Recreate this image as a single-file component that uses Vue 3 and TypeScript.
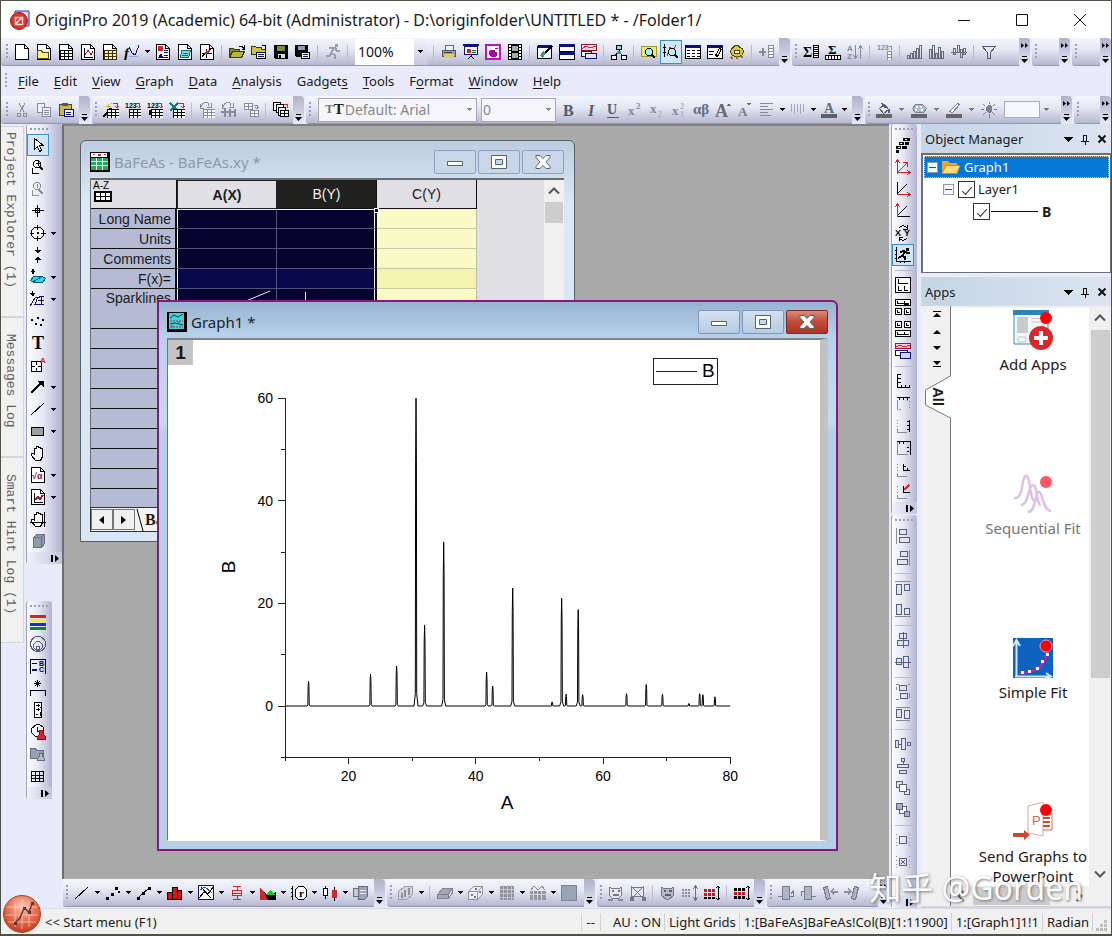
<script setup lang="ts">
import { h, ref } from 'vue'

interface Shape { d?: string; f?: string; s?: string; w?: number; t?: string; x?: number; y?: number; z?: number; serif?: boolean; it?: boolean }

const K = '#000'
const G = '#868a9b'
const R = '#d8232f'
const N = '#10107a'
const L = (d: string, s = K, w = 1): Shape => ({ d, s, w })
const F = (d: string, f = K): Shape => ({ d, f })
const B = (d: string, f = '#fff', s = K): Shape => ({ d, f, s })
const T = (t: string, x: number, y: number, z: number, f = K, serif = false, it = false): Shape => ({ t, x, y, z, f, serif, it })
const box = (x: number, y: number, w: number, hh: number) => `M${x} ${y}h${w}v${hh}h${-w}z`
const cells = (x: number, y: number, c: number, r: number, w: number, hh: number) => {
  let d = ''
  for (let j = 0; j < r; j++) for (let i = 0; i < c; i++) d += box(x + i * (w + 1), y + j * (hh + 1), w, hh)
  return d
}
const table = (x: number, y: number, c: number, r: number, w: number, hh: number, ink = K, fill = '#fff') => [
  F(box(x, y, c * (w + 1) + 1, r * (hh + 1) + 1), ink), F(cells(x + 1, y + 1, c, r, w, hh), fill),
]
const doc = [B('M1.5 .5h9l4 4v11h-13z'), L('M10.5 .5v4h4')]
const runner = (c: string) => [F('M10 0h3v3h-3z', c), L('M4 4h6l2 3h3M9 4l-3 5l4 2v4M6.5 9l-2 3h-4', c, 2)]
const magnifier = (x: number, y: number, f: string) => [B(`M${x + 1.5} ${y + .5}h3l2 2v3l-2 2h-3l-2-2v-3z`, f), L(`M${x + 6} ${y + 7}l3 3`, K, 2)]
const redArrow = (c: string) => [L('M10 1.5h4v4M12 4l2 2l2-2', c)]
const numTable = (c: string, a: string) => [T('123', 0, 6, 7, c), ...redArrow(a), ...table(4, 7, 3, 3, 3, 2, c)]
const hand = 'M5.5 15.5l-4-5v-2h2l1 1v-6h2v-2h2v1h2v1h2v8l-2 4z'
const frame = (x: number, y: number, w: number, hh: number, c = K) => [B(box(x + .5, y + .5, w, hh), '#fff', c), L(`M${x + 2.5} ${y + 2}v${hh - 3.5}h${w - 4}`, c)]
const dots = (a: string) => L(a, '#888b98')
const block = (d: string, c = '#55607a') => B(d, '#dfe3f2', c)

const icons: Record<string, Shape[]> = {
  new: doc,
  opendoc: [...doc, B('M1.5 6.5h4l1 2h6v6h-11z', '#ffef8a', '#5a4a00')],
  book: [...doc, ...table(2, 6, 3, 3, 3, 2)],
  graph: [...doc, L('M4.5 4v9h8', K), L('M5 11l3-5l3 5l2-4', '#b01822')],
  matrix: [...doc, ...table(2, 6, 3, 3, 3, 2, '#3a3000', '#fff39a')],
  func: [T('f', 0, 14, 15, K, true, true), L('M5 3l3 6l3 2l3-7l1-3', N), L('M5 12.5h9', '#9aa')],
  report: [...doc, F('M3 2h5v5h-5z', R), F('M3 14l3-5l3 5z', N), L('M9 6.5h4M9 8.5h4M9 11.5h4M9 13.5h4', N)],
  notes: [...doc, B('M4.5 6.5h9l-2 7h-8z', '#7fe0e0', '#0a6a6a'), L('M6 9h5M5 11h6', '#0a6a6a')],
  layout: [...doc, L('M3 12.5l9-8M3 9.5h10M7.5 5v9', K), L('M6 9.5l5-3', R, 2)],
  folder: [B('M.5 12.5v-8h4l1 1h5v2', '#8a8a1e', '#3c3c00'), B('M.5 13.5l3-6h12l-3 6z', '#b5b53a', '#3c3c00'), L('M10 2.5h3l2 2M15.5 1v4h-3', K)],
  folders: [B('M.5 10.5v-8h4l1 1h5v2h4v5z', '#c8c83e', '#3c3c00'), B('M5.5 8.5h9v6h-9z'), L('M7 10.5h6M7 12.5h6', N), L('M11 1.5h3v3', K)],
  save: [F('M1 1h14v14h-13l-1-1z'), F('M4 2h8v5h-8z', '#7b8f3a'), F('M5 10h7v4h-7z', '#dcdcdc'), F('M6 11h2v3h-2z')],
  saveall: [F('M0 1h13v12h-12l-1-1z'), F('M3 2h7v4h-7z', '#8b9ac0'), B('M6.5 8.5h8v6h-8z'), L('M8 10.5h5M8 12.5h5', N)],
  run: runner('#9a9dab'),
  print: [B('M4.5 1.5h8v5h-8z', '#f0f0f4', '#666'), B('M1.5 6.5h13v6h-13z', '#9b9ea8', '#555'), F('M3 10h10v4h-10z', '#d8d070'), L('M3 8.5h8', '#444')],
  slide: [B('M1.5 2.5h13v8h-13z', '#fff', N), L('M0 1h16', N, 2), F('M4 5h4v4h-4z', R), L('M9 6h4M9 8h4', '#0a7a30'), L('M8 11v2M5 15l3-3l3 3', K)],
  magenta: [B('M1 1h14v14h-14z', '#fff', '#c010c0'), L('M1 1h14v14h-14z', '#c010c0', 2), F('M5 6h5v2h2v3l-2 2h-4l-2-2v-3z', '#a008a8'), L('M10 4.5h3', '#a008a8')],
  film: [F('M1 0h14v16h-14z'), F('M5 2h6v5h-6zM5 9h6v5h-6z', '#9fb0a8'), F(cells(2, 1, 1, 5, 2, 2) + cells(12, 1, 1, 5, 2, 2), '#fff')],
  brush: [B('M.5 2.5h14v12h-14z'), F('M1 1h14v3h-14z', N), F('M3 12l3-5l3 2l-3 5z', '#2a9b9b'), L('M8 9l7-7', K, 2)],
  split: [...[0, 8].flatMap(y => [B(`M.5 ${y + 1}h15v6h-15z`), F(`M0 ${y}h16v3h-16z`, N)])],
  wins: [B('M.5 .5h15v6h-15z', '#ffe0e4', '#a01030'), L('M1 5l4-3l4 2l6-2', R), B('M.5 7.5h10v5h-10z', '#fff', N), B('M4.5 9.5h11v5h-11z', '#dfe7ff', N)],
  tree: [L('M8 5v4M3.5 12l4-4l5 4', K), B('M5.5 1.5h5v4h-5z', '#8fe0e0'), B('M.5 11.5h5v4h-5z'), B('M10.5 11.5h5v4h-5z'), F('M6 7h4v3h-4z', '#2a9b9b')],
  find: [B('M.5 2.5h15v10h-15z', '#eaea78', '#98982a'), ...magnifier(5, 4, '#9ff0f4')],
  graphfind: [L('M1.5 0v13M0 3.5h3M0 8.5h3', K), L('M4 12l3-9l2 6l4-8', R), ...magnifier(6, 4, '#b4f2f6')],
  list: [B('M.5 1.5h15v13h-15z'), F('M1 1h15v3h-15z', N), L('M2 6.5h3M7 6.5h3M12 6.5h3M2 9.5h3M7 9.5h3M12 9.5h3M2 12.5h3M7 12.5h3M12 12.5h3', K)],
  edit: [B('M.5 1.5h15v13h-15z'), F('M1 1h15v3h-15z', N), L('M2 7.5h5M2 10.5h4', K), B('M8.5 11.5l4-7l2 1l-4 7z', '#ffef70')],
  gear: [B('M2.5 4.5l2-1l1-2h4l1 2l3 1l1 3l-1 3l-3 2h-5l-3-2l-1-3z', '#d8c83c', '#4c4400'), B('M5.5 6.5h5v3h-5z', '#fff', '#4c4400'), L('M2 13l2 2M7.5 12v3M12 12l2 2', '#8a7a10', 2)],
  addcol: [L('M0 8h7M3.5 4v8', G, 2), ...table(9, 1, 1, 4, 4, 2, G)],
  sumcol: [T('Σ', 0, 13, 14, K, true), ...table(10, 1, 1, 6, 4, 1)],
  sumrow: [T('Σ', 3, 10, 13, K, true), ...table(0, 11, 5, 1, 2, 3)],
  sort: [T('A', 0, 7, 8, G), T('Z', 0, 15, 8, G), L('M8.5 1v13M6 11l2.5 3l2.5-3M13.5 15v-13M11 5l2.5-3l2.5 3', G)],
  num: [T('123', 0, 6, 7, G), L('M12 2.5h2v3', G), ...table(10, 7, 1, 3, 3, 2, G)],
  bars1: [L(box(.5, 11.5, 2, 3) + box(3.5, 9.5, 2, 5) + box(6.5, 7.5, 2, 7) + box(9.5, 4.5, 2, 10) + box(12.5, 1.5, 2, 13), '#666a7a')],
  bars2: [L(box(.5, 5.5, 2, 9) + box(3.5, 1.5, 2, 13) + box(6.5, 9.5, 2, 5) + box(9.5, 3.5, 2, 11) + box(12.5, 7.5, 2, 7), '#666a7a')],
  bars3: [L('M0 8.5h16' + box(2.5, 4.5, 2, 6) + box(6.5, 1.5, 2, 7) + box(9.5, 5.5, 2, 8) + box(12.5, 4.5, 2, 6), '#666a7a')],
  filter: [L('M1.5 2.5h13l-5 6v6h-3v-6z', '#555a6a')],
  cut: [L('M5 1l5 9M11 1l-5 9M3.5 11.5h3v3h-3zM9.5 11.5h3v3h-3z', G)],
  copy: [B('M1.5 1.5h7v9h-7z', '#f0f1f8', G), B('M6.5 5.5h8v9h-8z', '#f0f1f8', G), L('M8 8.5h5M8 10.5h5M8 12.5h5', G)],
  paste: [B('M1.5 2.5h12v11h-12z', '#c9b950', '#4d4a18'), F('M4 1h6v3h-6z', '#555'), B('M6.5 7.5h9v7h-9z', '#e8f4ff', N), L('M8 10.5h5M8 12.5h5', N)],
  wand: [L('M0 15l8-9', K, 2), L('M5 2v4M3 4h5M8 1l1 1', '#c8b820'), ...redArrow(R), ...table(4, 7, 3, 3, 3, 2)],
  num1: numTable(K, R),
  num2: [...numTable(K, R), F('M2 8h3v5h-3z', K)],
  excel: [L('M1 1l8 8M9 1l-8 8', '#0a7f7f', 2), ...redArrow(R), ...table(4, 7, 3, 3, 3, 2)],
  imp1: [L('M2 5c2-6 8-6 8-1M12 1v4h-4M1 2v4h4', G), ...table(4, 7, 3, 3, 3, 2, G)],
  imp2: [L('M2 5c2-6 8-6 8-1M12 1v4h-4M1 2v4h4', G), L('M0 9.5h15M3.5 7v8M8.5 7v8M13.5 7v8', G, 2)],
  imp3: [...table(1, 1, 2, 2, 3, 2, G), L('M11 3h3v3M12 5l2 2l2-2', G), ...table(7, 8, 2, 2, 3, 2, G)],
  stack: [B('M.5 .5h7v8h-7z'), B('M3.5 2.5h7v8h-7z'), B('M5.5 5.5h7v8h-7z'), L('M11 2.5h3v3', R), ...table(7, 8, 2, 2, 3, 2)],
  bold: [T('B', 2, 14, 16, '#555a66', true)],
  italic: [T('I', 5, 14, 16, '#555a66', true, true)],
  under: [T('U', 2, 12, 14, '#555a66', true), L('M2 15.5h12', '#555a66')],
  sup: [T('x', 1, 13, 13, G, true), T('2', 9, 7, 9, G, true)],
  sub: [T('x', 1, 11, 13, G, true), T('2', 9, 15, 8, '#aaacba', true)],
  supsub: [T('x', 1, 13, 13, G, true), T('2', 9, 7, 8, '#aaacba', true), T('1', 9, 15, 8, '#aaacba', true)],
  greek: [T('αβ', 0, 12, 15, '#6a6e7c', true)],
  bigger: [T('A', 0, 15, 18, '#666a76', true), F('M12 4l2-3l2 3z', '#666a76')],
  smaller: [T('A', 1, 14, 13, '#777b88', true), F('M10 1h4l-2 3z', '#666a76')],
  align: [L('M1 1.5h13M1 4.5h8M1 7.5h13M1 10.5h8M1 13.5h11', G)],
  vbars: [L('M1.5 2v8M4.5 2v10M7.5 2v8M10.5 2v10M13.5 2v8', '#a5a8b4')],
  fontcolor: [T('A', 3, 11, 14, '#666a76', true), F('M0 12h16v4h-16z', '#5a5e68')],
  fill: [B('M3.5 6.5l5-4l4 5l-5 4z', '#eef', '#5a5e6c'), L('M6 1l3 5M13 7v4', '#5a5e6c', 2), F('M0 12h16v4h-16z', '#666')],
  palette: [B('M1.5 6.5l3-4h7l4 4l-3 4h-8z', '#aebbd0', '#7a8090'), F('M5 4h2v2h-2zM9 4h2v2h-2zM4 7h2v2h-2zM10 7h2v2h-2z', '#fff'), F('M0 12h16v4h-16z', '#666')],
  pen: [B('M3.5 9.5l8-8l2 1l-7 8z', '#fff', '#777'), F('M0 12h16v4h-16z', '#666')],
  sun: [F('M5 5l2-2h2l2 2v4l-2 2h-2l-2-2z', '#7b7f8e'), L('M8 0v2M8 12v4M0 7.5h3M13 7.5h3M2 2l2 2M12 4l2-2M2 13l3-3M14 13l-3-3', '#7b7f8e')],
  pointer: [B('M4.5 1.5v11l3-3l2 5l2-1l-2-5h4z')],
  zoomin: [...magnifier(4, 1, '#fff'), L('M6 4.5h5M8.5 2v5M2.5 9v5h6', K)],
  zoomout: [B('M5.5 1.5h3l2 2v3l-2 2h-3l-2-2v-3z', '#e8eaf4', G), L('M9 9l4 4', G, 2), L('M7.5 3v4M2.5 9v5h6', G)],
  cross: [L('M2 7.5h12M7.5 2v12', K), L('M5.5 5.5h4v4h-4z')],
  target: [B('M4.5 2.5h6l3 3v5l-3 3h-6l-3-3v-5z'), L('M7.5 0v5M7.5 11v5M0 8h4M11 8h5', K), F('M7 7h2v2h-2z')],
  range: [F('M5 3h6l-3 4zM5 13h6l-3-4z'), L('M7.5 0v4M7.5 12v4', K)],
  mask: [F('M1 2h4l-2 4zM2 0h2v3h-2z'), B('M.5 11.5l3-4h9l3 2l-3 4h-9z', '#2fd5e8', '#0a5a7a'), L('M3 13l8-5', '#0a5a7a')],
  pick: [F('M0 2h5l-2 4zM2 0h1v3h-1z'), L('M0 15l5-8l9-2M8 6l-3 7h9M8 9h6', N), L('M11 6v7', K)],
  points: [F('M1 6h2v2h-2zM5 10h2v2h-2zM7 4h2v2h-2zM10 11h2v2h-2zM12 6h2v2h-2z')],
  text: [T('T', 2, 14, 18, K, true)],
  region: [B('M1.5 4.5h10v10h-10z'), L('M6.5 4v4M6.5 11v4M2 9.5h3M8 9.5h4', K), T('A', 10, 6, 8, R)],
  arrow: [L('M1 14l9-9', K, 2), F('M7 2h7v7z')],
  line: [L('M1 14l13-12', K)],
  rect: [B('M1.5 4.5h12v8h-12z', '#a0a0a0')],
  pan: [B(hand)],
  formula: [...doc, T('√α', 2, 12, 9, '#a01040')],
  insgraph: [...doc, L('M4.5 4v9h8', K), L('M5 11l3-3l2 2l3-4', '#b01822', 2)],
  pan2: [B(hand), L('M0 11.5h16M14.5 1v15', K)],
  cube: [B('M3.5 4.5l3-3h8v9l-3 4h-8z', '#8d9ab0', '#66708a'), L('M3.5 4.5h8v9M11.5 4.5l3-3', '#66708a')],
  rainbow: [F('M0 1h16v3h-16z', '#e02020'), F('M0 5h16v3h-16z', '#f4ee20'), F('M0 9h16v3h-16z', '#1530d0'), F('M0 13h16v3h-16z', '#138030')],
  rings: [L('M8 .5a7.5 7.5 0 1 0 .1 0M8 5.5a4.5 4.5 0 1 0 .1 0M8 10a2 2 0 1 0 .1 0', '#555c7a')],
  legend: [L('M.5 16v-15h15v15', K), L('M2 5.5h5', K), L('M2 11.5h5', N, 2), T('B', 9, 8, 7), T('C', 9, 14, 7)],
  star: [L('M4 3.5h7M7.5 0v7M5 1l5 5M10 1l-5 5', K), L('M.5 16v-6h15v6', K)],
  scale: [B('M4.5 .5h7v15h-7z'), L('M6 3.5h4M8 2v3M6 7.5h4M8 6v3M6 12.5h2M10 5v1M10 10v4', K)],
  clock: [B('M6.5 .5h3l4 3v4l-4 5h-4l-4-4v-4z'), L('M7.5 3v4h3', K), B('M9.5 6.5h4v4l2 2v3h-8v-3l2-2z', R, '#8c0a10')],
  stamp: [B('M.5 2.5h5l1 2h7v8h-13z', '#9aa0b4', '#666c80'), B('M9.5 7.5h3v3l2 2v2h-7v-2l2-2z', '#b7bccb', '#666c80')],
  grid: [L(box(1.5, 3.5, 12, 10) + 'M1 7h13M1 10.5h13M5.5 3v11M9.5 3v11', K)],
  pattern: [F('M8 1h7v3h-7zM4 5h5v3h-5zM10 5h4v3h-4zM1 9h5v3h-5zM7 9h5v3h-5zM1 13h3v3h-3z'), F('M10 2h2v1h-2zM5 6h2v1h-2zM3 10h2v1h-2z', '#fff')],
  rescale: [L('M2.5 15v-14M0 4l2.5-3l2.5 3M2 13.5h13M12 11l3 2.5l-3 2.5', R), L('M3 13l9-9M8 3.5h4v4', R)],
  rescalex: [L('M2.5 13v-12M3 12l9-9', K), L('M2 13.5h13M12 11l3 2.5l-3 2.5', R)],
  rescaley: [L('M3 13.5h12M3 12l9-9', K), L('M2.5 14v-13M0 4l2.5-3l2.5 3', R)],
  swap: [T('X', 0, 11, 9), T('Y', 9, 11, 9), L('M4 3c2-3 6-3 8 0M12 0v4h-4M12 13c-2 3-6 3-8 0M4 16v-4h4', K)],
  speed: [L('M1.5 0v14.5h14M0 3.5h1M0 7.5h1M0 11.5h1M5.5 16v-2M9.5 16v-2', K), F('M11 1h3v3h-3z'), L('M5 5l4-1l3 2h3M10 5l-3 4l3 1v3M7 9l-4 2', K, 2)],
  lay1: [B('M.5 .5h15v15h-15z'), L('M3.5 2v4h9M3.5 9v4h3M9.5 9v4h3', K)],
  lay2: [...frame(0, 0, 15, 6), L('M9.5 2v3h4', K), ...frame(0, 9, 6, 6), ...frame(9, 9, 6, 6)],
  lay3: [...frame(0, 0, 6, 6), ...frame(9, 0, 6, 6), ...frame(0, 9, 15, 6), L('M9.5 11v2h4', K)],
  lay4: [B('M.5 .5h15v5h-15z', '#ffc8d4', '#a01040'), L('M1 4l4-2l4 2l6-2', R), B('M.5 7.5h12v5h-12z', '#fff', N), B('M5.5 9.5h10v6h-10z', '#cfd6ff', N)],
  ax1: [L('M3 1.5h3M3 5.5h3M3 9.5h3M2.5 1v13h12M6.5 12v2M10.5 12v2M14.5 12v2', K)],
  ax2: [L('M2 2.5h13M4.5 3v2M8.5 3v2M12.5 3v2', K), dots('M2.5 5v10M12.5 5v1M14.5 6v1M14.5 9v1M14.5 12v1M4 14.5h2')],
  ax3: [L('M14.5 3v12M12 4.5h2M12 8.5h2M12 12.5h2', K), dots('M2.5 3v1M2.5 6v1M2.5 9v1M2.5 12v3h9')],
  ax4: [L('M2 2.5h13v13M4.5 3v2M8.5 3v2M12 8.5h2M12 12.5h2', K), dots('M2.5 3v12h10')],
  ax5: [L('M8.5 3v6h6M9 5.5h2M12.5 9v-2', K), dots('M2.5 3v1M2.5 6v1M2.5 9v1M2.5 12v3h9')],
  ax6: [L('M8.5 3v6h6', K), L('M9 7l5-5', R, 2), dots('M2.5 3v1M2.5 6v1M2.5 9v1M2.5 12v3h9')],
  alL: [dots('M1.5 0v16'), block(box(4.5, 1.5, 7, 5)), block(box(4.5, 9.5, 10, 5))],
  alR: [dots('M14.5 0v16'), block(box(5.5, 1.5, 7, 5)), block(box(2.5, 9.5, 10, 5))],
  alT: [dots('M0 1.5h16'), block(box(1.5, 4.5, 5, 10)), block(box(9.5, 4.5, 5, 6))],
  alB: [dots('M0 14.5h16'), block(box(1.5, 2.5, 5, 10)), block(box(9.5, 6.5, 5, 6))],
  alV: [block(box(4.5, 1.5, 7, 5)), block(box(2.5, 8.5, 11, 5)), L('M8 0v16', '#55607a')],
  alH: [block(box(1.5, 4.5, 5, 6)), block(box(8.5, 2.5, 5, 11)), L('M0 8h16', '#55607a')],
  sameW: [dots('M1 .5h3M1 15.5h3M13 .5h2M1.5 3v3M14.5 9v5'), block(box(4.5, 1.5, 7, 5)), block(box(5.5, 9.5, 7, 5))],
  sameH: [dots('M1 1.5h14M1 14.5h14'), block(box(1.5, 3.5, 5, 8)), block(box(9.5, 4.5, 5, 8))],
  disH: [block(box(.5, 4.5, 3, 7)), block(box(6.5, 2.5, 4, 11)), block(box(12.5, 6.5, 3, 3)), L('M4 8h2', '#55607a')],
  disV: [block(box(6.5, .5, 3, 3)), block(box(2.5, 6.5, 11, 3)), block(box(4.5, 12.5, 7, 3)), L('M8 4v2', '#55607a')],
  front: [block(box(1.5, 1.5, 6, 6)), block(box(9.5, 9.5, 5, 5)), B(box(4.5, 4.5, 7, 7), '#fff', '#55607a')],
  back: [B(box(4.5, 4.5, 7, 7), '#fff', '#55607a'), B(box(1.5, 1.5, 6, 6), '#aab0c6', '#55607a'), B(box(9.5, 9.5, 5, 5), '#aab0c6', '#55607a')],
  group: [L(box(4.5, 4.5, 7, 7), '#55607a'), dots('M1 2.5h1M1 6.5h1M1 10.5h1M1 13.5h1M14 2.5h1M14 6.5h1M14 10.5h1M14 13.5h1')],
  ungroup: [L(box(4.5, 4.5, 7, 7) + 'M6 6l4 4M10 6l-4 4', '#55607a'), dots('M1 2.5h1M1 6.5h1M1 10.5h1M1 13.5h1M14 2.5h1M14 6.5h1M14 10.5h1M14 13.5h1')],
  scatter: [F('M1 12h3v3h-3zM6 8h3v3h-3zM10 2h3v3h-3zM13 6h2v2h-2z')],
  linept: [L('M2 13l12-11', K), F('M1 12h3v3h-3zM6 7h3v3h-3zM12 2h3v3h-3z')],
  column: [B(box(.5, 7.5, 5, 7), '#d01818'), B(box(5.5, 2.5, 5, 12), '#d01818'), B(box(10.5, 5.5, 4, 9), '#d01818')],
  plotbox: [B('M.5 .5h15v14h-15z', '#fff', N), L('M1 13l5-6l4 2l5-7M3 2l10 11', K), L('M2 5l5-3l7 6', '#2050d0')],
  boxplot: [L('M4 1.5h8M8 1v4M8 11v4M4 14.5h8', R), B('M3.5 5.5h9v5h-9z', '#ffd8d8', R), L('M3 8h10', R)],
  area: [F('M0 3l8 7l8-3v8h-16z'), F('M0 3l4 4l4 8h-8z', R), F('M6 10l4-5l5 5z', '#20c030')],
  polar: [L('M1.5 1v14M0 3.5h1M0 7.5h1M0 11.5h1', K), B('M7.5 1.5h5l3 3v7l-3 3h-5l-3-3v-7z'), T('r', 8, 12, 11, K, true)],
  candle: [L('M3.5 1v13M12.5 2v14', K), B(box(1.5, 3.5, 4, 7)), F(box(10, 5, 5, 8), R)],
  wall: [B('M.5 3.5h9v8h-9z', '#c7cbd8', '#666c7c'), B('M5.5 1.5h9v10l-3 3h-6z', '#9da3b6', '#666c7c'), L('M7 5h6M7 8h6', '#eef')],
  g3a: [B('M.5 6.5l6-5h8v8l-6 5h-8z', '#d2d4de', '#999ca8'), F('M3 8h2v5h-2zM6 5h2v7h-2zM10 3h2v7h-2z', '#8b8f9c')],
  g3b: [B('M.5 9.5l5-6h10l-4 6zM.5 9.5h11v4h-11z', '#a3a6b1', '#80838e'), L('M11.5 13l4-5v-4', '#80838e')],
  g3c: [B('M.5 6.5l5-5h9v8l-5 5h-9z', '#ecedf3', '#90939e'), L('M.5 6.5h9v8M9.5 6.5l5-5', '#90939e'), F('M3 9h2v2h-2zM6 11h2v2h-2zM7 3h2v2h-2zM11 6h2v2h-2z', '#777')],
  g3d: [F('M1 1h14v14h-14z', '#8f929c'), L('M0 4.5h16M0 8.5h16M0 12.5h16M4.5 0v16M8.5 0v16M12.5 0v16', '#c4c6cf')],
  g3e: [L('M1 5l3-4l4 4l4-4l3 4', G), F('M0 6h16v9h-16z', '#94979f'), L('M0 9.5h16M3.5 6v9M7.5 6v9M11.5 6v9', '#d4d5dc')],
  g3f: [B('M.5 .5h15v15h-15z', '#99a4b6', '#7c8496')],
  face: [B('M1.5 2.5l3 1h6l3-1v8l-3 3h-6l-3-3z', '#e6e8ef', '#747885'), F('M4 5h2v2h-2zM10 5h2v2h-2zM5 9h6v2h-6z', '#747885'), L('M0 15h5M10 15h5', G, 2)],
  facex: [B('M1.5 2.5h12v9h-12z', '#e6e8ef', '#747885'), L('M1 1l13 13M14 1l-13 13', '#747885'), F('M0 12h4v4h-4zM12 12h4v4h-4z', '#747885')],
  shield: [B('M1.5 2.5l3 1h6l3-1v8l-5 4h-2l-5-4z', '#b6bac6', '#747885'), F('M4 5h2v2h-2zM9 5h3v2h-3zM5 9h6v2h-6z', '#595e6a')],
  dotsgrey: [F(cells(0, 4, 3, 3, 2, 2), '#8a8e9b'), L('M13.5 1v14M11 4l2.5-3l2.5 3M11 12l2.5 3l2.5-3', '#6c7080')],
  dotsred: [F(cells(0, 4, 3, 2, 3, 3), '#c01828'), F(cells(0, 12, 3, 1, 3, 2)), L('M14 1v14M12 3l2-2l2 2M12 13l2 2l2-2', K)],
  dotsmix: [F(cells(0, 3, 3, 3, 3, 3)), F(cells(0, 7, 3, 1, 3, 3), '#c01828'), L('M14 1v14M12 3l2-2l2 2M12 13l2 2l2-2', K)],
  rotA: [B('M4.5 1.5h7v13h-7z', '#aeb5c6', '#747b8e'), L('M0 11.5h4M12 11.5h3v-5l-2 2', '#747b8e')],
  rotB: [B('M4.5 1.5h7v13h-7z', '#aeb5c6', '#747b8e'), L('M1.5 11v-5h3M12 11.5h4', '#747b8e')],
  rotC: [B('M1.5 2.5l4-1l3 12l-4 1z', '#aeb5c6', '#747b8e'), L('M9 6.5h7M12 3.5l-3 3l3 3', '#8a90a2', 2)],
  rotD: [B('M14.5 2.5l-4-1l-3 12l4 1z', '#aeb5c6', '#747b8e'), L('M0 6.5h7M4 3.5l3 3l-3 3', '#8a90a2', 2)],
}

const Icon = (p: { name: string }) =>
  h('svg', { class: 'ico', viewBox: '0 0 16 16', width: 16, height: 16, 'aria-hidden': 'true' },
    (icons[p.name] ?? []).map(s => s.t
      ? h('text', { x: s.x, y: s.y, fill: s.f, 'font-size': s.z, 'font-weight': 700, 'font-style': s.it ? 'italic' : 'normal', 'font-family': s.serif ? 'Liberation Serif, serif' : 'Liberation Sans, sans-serif' }, s.t)
      : h('path', { d: s.d, fill: s.f ?? 'none', stroke: s.s ?? 'none', 'stroke-width': s.w ?? 1 })))
Icon.props = ['name']

const caret = () => h('svg', { class: 'caret', viewBox: '0 0 5 3', width: 5, height: 3 }, [h('path', { d: 'M0 0h5v1h-5zM1 1h3v1h-3zM2 2h1v1h-1z' })])
const combos: Record<string, { label: string; value: string }> = {
  zoom: { label: 'Zoom', value: '100%' },
  font: { label: 'Font', value: 'Default: Arial' },
  size: { label: 'Font size', value: '0' },
}

/* Token syntax: "|" separator, "name+" adds a menu caret, "name!" is pressed, "#zoom" is a combo box. */
const tool = (token: string) => {
  if (token === '|') return h('i', { class: 'sep' })
  if (token === '#swatch') return h('span', { class: 'split' }, [h('button', { class: 'swatch', type: 'button', 'aria-label': 'Colour' }), h('button', { class: 'menu', type: 'button', 'aria-label': 'Colour menu' }, [caret()])])
  if (token[0] === '#') {
    const key = token.slice(1)
    return h('label', { class: ['combo', key] }, [
      key === 'font' ? h('span', { class: 'tt' }, [h('small', 'T'), h('b', 'T')]) : null,
      h('select', { 'aria-label': combos[key].label }, [h('option', combos[key].value)]),
      h('span', { class: 'drop' }, [caret()]),
    ])
  }
  const name = token.replace(/[+!]/g, '')
  const btn = h('button', { class: ['tool', { on: token.includes('!') }], type: 'button', 'aria-label': name }, [h(Icon, { name })])
  return token.includes('+') ? h('span', { class: 'split' }, [btn, h('button', { class: 'menu', type: 'button', 'aria-label': name + ' menu' }, [caret()])]) : btn
}
interface BarProps { items: string; vertical?: boolean; more?: boolean }
const ToolBar = (p: BarProps) =>
  h('div', { class: ['bar', p.vertical ? 'v' : 'h'], role: 'toolbar' }, [
    h('i', { class: 'grip' }),
    ...p.items.split(' ').filter(Boolean).map(tool),
    h('i', { class: 'fillup' }),
    h('button', { class: 'cap', type: 'button', 'aria-label': 'Toolbar options' }, p.vertical
      ? [h('svg', { viewBox: '0 0 8 7', width: 8, height: 7 }, [h('path', { d: 'M0 0h2v7h-2zM4 0l4 3.5l-4 3.5z' })])]
      : [
          p.more ? h('svg', { viewBox: '0 0 8 5', width: 8, height: 5 }, [h('path', { d: 'M0 0l3 2.5l-3 2.5zM4 0l3 2.5l-3 2.5z' })]) : h('i'),
          h('svg', { viewBox: '0 0 7 7', width: 7, height: 7 }, [h('path', { d: 'M1 0h5v1h-5zM0 3h7l-3.5 4z' })]),
        ]),
  ])
ToolBar.props = { items: String, vertical: Boolean, more: Boolean }

const top1 = 'new opendoc book graph matrix func+ report notes layout | folder folders save saveall | run | #zoom | print slide magenta film | brush split wins | tree | find graphfind! list edit gear | addcol'
const top2 = 'sumcol sumrow sort | num | bars1 bars2 bars3 | filter'
const left1 = 'pointer! zoomin zoomout cross target+ range mask+ pick+ points text region arrow+ line+ rect+ pan formula+ insgraph+ pan2 cube'
const left2 = 'rainbow rings legend star scale clock stamp grid'
const right1 = 'pattern rescale rescalex rescaley swap speed! | lay1 lay2 lay3 lay4 | ax1 ax2 ax3 ax4 ax5 ax6'
const right2 = 'alL alR | alT alB | alV alH | sameW sameH | disH disV front back | group ungroup'

const menus = ['File', 'Edit', 'View', 'Graph', 'Data', 'Analysis', 'Gadgets', 'Tools', 'Format', 'Window', 'Help']
const keyAt: Record<string, number> = { Gadgets: 6, Format: 1 }
const menuParts = menus.map(m => { const i = keyAt[m] ?? 0; return [m.slice(0, i), m[i], m.slice(i + 1)] })

const tabs = ['Project Explorer (1)', 'Messages Log', 'Smart Hint Log (1)']
const sheetRows = ['Long Name', 'Units', 'Comments', 'F(x)=', 'Sparklines', '', '', '', '', '', '', '', '', '']
const status = ['--', 'AU : ON', 'Light Grids', '1:[BaFeAs]BaFeAs!Col(B)[1:11900]', '1:[Graph1]1!1', 'Radian']
const apps = [
  { id: 'add', name: 'Add Apps' }, { id: 'seq', name: 'Sequential Fit' },
  { id: 'fit', name: 'Simple Fit' }, { id: 'ppt', name: 'Send Graphs to PowerPoint' },
]
const layerOn = ref(true)
const plotOn = ref(true)

const px = (a: number) => 117 + (a - 10) * 6.36
const py = (b: number) => 366 - b * 5.13
const peaks: [number, number][] = [
  [13.7, 4.8], [23.45, 6.2], [27.55, 7.8], [30.6, 60], [31.95, 15.8], [34.95, 32], [41.7, 6.6], [42.65, 3.9], [45.8, 23],
  [52, .8], [53.5, 21], [54.2, 2.3], [56.1, 18.8], [56.8, 2.2], [63.7, 2.4], [66.8, 4.2], [69.35, 2.3], [73.5, .5], [75.2, 2.4], [75.7, 2.2], [77.6, 1.8],
]
const trace = 'M' + px(10) + ' ' + py(0) + peaks.map(([a, b]) => {
  const x = px(a), foot = b > 10 ? 2 : 1.5
  return `L${x - foot} ${py(0)}L${x - .7} ${py(b * .04)}L${x - .4} ${py(b * .8)}L${x} ${py(b)}L${x + .4} ${py(b * .8)}L${x + .7} ${py(b * .04)}L${x + foot} ${py(0)}`
}).join('') + `L${px(80)} ${py(0)}`
const yMajor = [0, 20, 40, 60]
const xMajor = [20, 40, 60, 80]
</script>

<template>
  <div class="shell">
    <header class="title">
      <svg class="logo" viewBox="0 0 20 20" width="20" height="20" aria-hidden="true">
        <path d="M5 1h14v15h-14z" fill="#cdd6f5" stroke="#2b3c9a" />
        <circle cx="9" cy="11" r="8.5" fill="#d9372c" stroke="#9c1c14" />
        <path d="M5.5 7.5h7v7h-7zM6 14l6-7" fill="none" stroke="#ffd9d2" stroke-width="1.5" />
      </svg>
      <h1>OriginPro 2019 (Academic) 64-bit (Administrator) - D:\originfolder\UNTITLED * - /Folder1/</h1>
      <div class="sysbtns">
        <button type="button" aria-label="Minimize"><svg viewBox="0 0 14 14" width="14" height="14"><path d="M1 7.5h12" /></svg></button>
        <button type="button" aria-label="Maximize"><svg viewBox="0 0 14 14" width="14" height="14"><path d="M1.5 1.5h11v11h-11z" /></svg></button>
        <button type="button" aria-label="Close"><svg viewBox="0 0 14 14" width="14" height="14"><path d="M1 1l12 12M13 1l-12 12" /></svg></button>
      </div>
    </header>

    <div class="row">
      <ToolBar class="w1" :items="top1" />
      <ToolBar class="w2" :items="top2" more />
      <ToolBar class="w3" items="" more />
      <ToolBar class="w4" items="" more />
    </div>
    <nav class="menubar">
      <i class="dots" />
      <button v-for="m in menuParts" :key="m.join('')" type="button">{{ m[0] }}<u>{{ m[1] }}</u>{{ m[2] }}</button>
    </nav>
    <div class="row">
      <ToolBar class="w5" items="cut copy paste" />
      <ToolBar class="w6" items="wand num1 num2 excel | imp1 imp2 imp3 | stack" />
      <ToolBar class="w7" items="#font #size bold italic under sup sub supsub greek bigger smaller align+ vbars+ fontcolor+" />
      <ToolBar class="w8 wide" items="fill+ palette+ pen+ sun #swatch" more />
      <ToolBar class="w4" items="" more />
    </div>

    <main class="body">
      <aside class="docktabs">
        <button v-for="t in tabs" :key="t" type="button">{{ t }}</button>
      </aside>
      <div class="leftbars">
        <ToolBar :items="left1" vertical />
        <ToolBar class="small" :items="left2" vertical />
      </div>

      <div class="center">
        <section class="mdi">
          <article class="win sheet">
            <header>
              <svg viewBox="0 0 20 20" width="20" height="20" aria-hidden="true">
                <path d="M0 0h20v20h-20z" /><path d="M1 1h16v4h-16z" fill="#fff" /><path d="M3 2h2v1h-2zM8 2h3v2h-3zM14 2h2v1h-2z" fill="#d02030" />
                <path d="M1 6h17v12h-17z" fill="#24a860" /><path d="M1 9.5h17M1 13.5h17M6.5 6v12M12.5 6v12" stroke="#dff5e6" />
              </svg>
              <h2>BaFeAs - BaFeAs.xy *</h2>
              <span class="winbtns">
                <button type="button" aria-label="Minimize"><svg viewBox="0 0 18 18" width="18" height="18"><path d="M1.5 8.5h15v4h-15z" /></svg></button>
                <button type="button" aria-label="Maximize"><svg viewBox="0 0 18 18" width="18" height="18"><path d="M1.5 2.5h15v13h-15zM5.5 6.5v5h7v-5z" /></svg></button>
                <button type="button" aria-label="Close"><svg viewBox="0 0 18 18" width="18" height="18"><path d="M2 2.5h4l3 3l3-3h4v2l-4 4.5l4 4.5v2h-4l-3-3l-3 3h-4v-2l4-4.5l-4-4.5z" /></svg></button>
              </span>
            </header>
            <div class="sheetbody">
              <table>
                <thead>
                  <tr>
                    <th class="corner" aria-label="Sort">
                      <svg viewBox="0 0 20 20" width="20" height="20"><text x="0" y="7" font-size="10" font-family="Liberation Sans, sans-serif">A-Z</text><path d="M1 9h18v11h-18z" /><path d="M3 11h4v3h-4zM8 11h4v3h-4zM13 11h4v3h-4zM3 15h4v3h-4zM8 15h4v3h-4zM13 15h4v3h-4z" fill="#fff" /></svg>
                    </th>
                    <th class="colA">A(X)</th><th class="colB">B(Y)</th><th class="colC">C(Y)</th>
                  </tr>
                </thead>
                <tbody>
                  <tr v-for="(r, i) in sheetRows" :key="i" :class="{ tall: i === 4, alt: i === 3 }">
                    <th>{{ r }}</th>
                    <td class="sel first"><svg v-if="i === 4" viewBox="0 0 98 38" class="spark"><path d="M69 12l24-10" /></svg></td>
                    <td class="sel last"><svg v-if="i === 4" viewBox="0 0 98 38" class="spark"><path d="M28.5 3v20" /></svg></td>
                    <td class="yel" />
                  </tr>
                </tbody>
              </table>
              <div class="vscroll"><svg viewBox="0 0 12 8" width="12" height="8"><path d="M1 6.5l5-5l5 5" /></svg><i /></div>
            </div>
            <footer>
              <button type="button" aria-label="Previous sheet"><svg viewBox="0 0 6 8" width="6" height="8"><path d="M5 0v8l-5-4z" /></svg></button>
              <button type="button" aria-label="Next sheet"><svg viewBox="0 0 6 8" width="6" height="8"><path d="M0 0v8l5-4z" /></svg></button>
              <svg viewBox="0 0 10 22" width="10" height="22"><path d="M2 0l6 22" stroke="#000" /></svg>
              <strong>BaFeAs</strong>
            </footer>
          </article>

          <article class="win plot">
            <header>
              <svg viewBox="0 0 20 20" width="20" height="20" aria-hidden="true">
                <path d="M0 0h20v20h-20z" /><path d="M2 1h15v16h-15z" fill="#3fd4dc" /><path d="M3 6l4-3l4 2l5-3M3 12l5-1l8 2" fill="none" stroke="#083c50" /><path d="M3 9h13M3 15h13M5 13v2M12 9v3" stroke="#c02838" stroke-dasharray="2 1" />
              </svg>
              <h2>Graph1 *</h2>
              <span class="winbtns">
                <button type="button" aria-label="Minimize"><svg viewBox="0 0 18 18" width="18" height="18"><path d="M1.5 8.5h15v4h-15z" /></svg></button>
                <button type="button" aria-label="Maximize"><svg viewBox="0 0 18 18" width="18" height="18"><path d="M1.5 2.5h15v13h-15zM5.5 6.5v5h7v-5z" /></svg></button>
                <button type="button" class="close" aria-label="Close"><svg viewBox="0 0 18 18" width="18" height="18"><path d="M2 2.5h4l3 3l3-3h4v2l-4 4.5l4 4.5v2h-4l-3-3l-3 3h-4v-2l4-4.5l-4-4.5z" /></svg></button>
              </span>
            </header>
            <div class="page">
              <b class="layer">1</b>
              <svg class="chart" viewBox="0 0 652 500" role="img" aria-label="B versus A">
                <path d="M117.5 58v359M117 417.5h446" class="ax" />
                <g v-for="b in yMajor" :key="'y' + b">
                  <path :d="`M110 ${py(b)}h7M113 ${py(b) + 51.3}h4`" class="ax" />
                  <text x="105" :y="py(b) + 5" text-anchor="end">{{ b }}</text>
                </g>
                <g v-for="a in xMajor" :key="'x' + a">
                  <path :d="`M${px(a)} 417v7M${px(a) - 63.6} 417v4`" class="ax" />
                  <text :x="px(a)" y="441" text-anchor="middle">{{ a }}</text>
                </g>
                <path :d="trace" class="trace" />
                <text x="339" y="469" text-anchor="middle" class="big">A</text>
                <text transform="translate(67 227) rotate(-90)" text-anchor="middle" class="big">B</text>
                <path d="M485.5 18.5h64v26h-64z" class="lg" /><path d="M488 31.5h41" class="ax" />
                <text x="534" y="37" class="big">B</text>
              </svg>
            </div>
          </article>
        </section>
        <div class="row bottom">
          <ToolBar class="w9" items="line+ scatter+ linept+ column+ plotbox+ boxplot+ area+ polar+ candle+ wall" />
          <ToolBar class="w10" items="g3a+ | g3b+ g3c+ g3d+ g3e+ g3f" />
          <ToolBar class="w11" items="face facex | shield dotsgrey dotsred | dotsmix" />
          <ToolBar class="w12" items="rotA rotB rotC rotD" more />
        </div>
      </div>

      <div class="rightbars">
        <ToolBar :items="right1" vertical />
        <ToolBar class="grow" :items="right2" vertical />
      </div>

      <aside class="panels">
        <section class="panel">
          <header><h2>Object Manager</h2><svg viewBox="0 0 44 12" width="44" height="12" aria-hidden="true"><path d="M1 4h9l-4.5 5z" /><path d="M20.5 2v6M23.5 2v6M20 2.5h4M18 8.5h8M22.5 8v4" class="ln" /><path d="M35.5 2.5l7 7M42.5 2.5l-7 7" class="ln bold" /></svg></header>
          <div class="treebox">
            <div class="node root"><button type="button" class="exp" aria-label="Collapse" />
              <svg viewBox="0 0 20 16" width="20" height="16" aria-hidden="true"><path d="M1 14v-12h6l2 2h7v3" fill="#e2a83c" /><path d="M1 14.5l4-8h14l-3 8z" fill="#ffd97c" stroke="#c88c24" /></svg>Graph1</div>
            <div class="node l1"><button type="button" class="exp" aria-label="Collapse" /><label><input v-model="layerOn" type="checkbox">Layer1</label></div>
            <div class="node l2"><label><input v-model="plotOn" type="checkbox" aria-label="B"><i class="sample" /><b>B</b></label></div>
          </div>
        </section>
        <section class="panel apps">
          <header><h2>Apps</h2><svg viewBox="0 0 44 12" width="44" height="12" aria-hidden="true"><path d="M1 4h9l-4.5 5z" /><path d="M20.5 2v6M23.5 2v6M20 2.5h4M18 8.5h8M22.5 8v4" class="ln" /><path d="M35.5 2.5l7 7M42.5 2.5l-7 7" class="ln bold" /></svg></header>
          <div class="appbody">
            <div class="rail">
              <svg viewBox="0 0 29 112" width="29" height="112" aria-hidden="true">
                <path d="M3 84.5l26-14.5v42l-26-13.5z" fill="#fff" />
                <path d="M28.5 0v70l-25 14v15l25 13" fill="none" stroke="#777" />
                <path d="M11 5h8v1h-8zM11 11l4-4l4 4zM11 28l4-4l4 4zM11 40h8l-4 4zM11 55h8l-4 4zM11 60h8v1h-8z" />
              </svg>
              <span>All</span>
            </div>
            <div class="mid">
              <div class="applist">
                <button v-for="a in apps" :key="a.id" type="button" :class="['app', a.id]">
                  <svg viewBox="0 0 40 40" width="40" height="40" aria-hidden="true">
                    <g v-if="a.id === 'add'">
                      <path d="M1 1h34v33h-34z" fill="#f4f6f7" stroke="#3d8fae" /><path d="M0 0h36v5h-36z" fill="#2a86b4" /><path d="M4 7h11v16h-11z" fill="#c9cccd" /><path d="M18 8.5h14M18 12h10M5 27h8v5h-8zM18 24h6" stroke="#c4c8ca" fill="none" />
                      <circle cx="28" cy="28" r="12" fill="#d8282e" /><path d="M28 21v14M21 28h14" stroke="#fff" stroke-width="4" />
                    </g>
                    <g v-else-if="a.id === 'seq'" fill="none" stroke="#dcc3e4" stroke-width="2.5">
                      <path d="M1 24c10 2 7-22 12-22s3 24 9 25M8 31c8 0 7-20 12-20s3 20 8 20M15 38c8 0 7-20 11-20s3 18 12 19" />
                    </g>
                    <g v-else-if="a.id === 'fit'">
                      <path d="M0 0h40v40h-40z" fill="#0f61c0" /><path d="M3.5 39v-36M0 8l3.5-6l3.5 6M2 38.5h34M33 35l5 3.5l-5 2" stroke="#cfe6ff" fill="none" stroke-width="2" /><path d="M6 35c16 0 24-4 29-22" stroke="#c221a0" fill="none" stroke-width="2.5" />
                      <path d="M8 33h3v3h-3zM15 32h3v3h-3zM23 29h3v3h-3zM28 22h3v3h-3zM33 15h3v3h-3z" fill="#fff" />
                    </g>
                    <g v-else>
                      <path d="M15 4l15-4v34l-15-3z" fill="#fff" stroke="#e3a79b" /><path d="M30 12h9v16h-9" fill="none" stroke="#d36a52" /><path d="M30 16h7M30 20h7M30 24h7" stroke="#cf4a2c" stroke-width="2" /><path d="M0 31h11v-3l6 5l-6 5v-3h-11z" fill="#c9492c" />
                      <text x="19" y="23" font-size="13" fill="#d36a52" font-family="Liberation Sans, sans-serif">P</text>
                    </g>
                    <circle cx="33" cy="8" r="6" :fill="a.id === 'seq' ? '#ff5560' : '#fb0006'" :stroke="a.id === 'fit' ? '#f2a0a8' : 'none'" />
                  </svg>
                  <span>{{ a.name }}</span>
                </button>
              </div>
              <div class="hscroll"><svg viewBox="0 0 8 12" width="8" height="12"><path d="M6.5 1l-5 5l5 5" /></svg><i /><svg viewBox="0 0 8 12" width="8" height="12"><path d="M1.5 1l5 5l-5 5" /></svg></div>
            </div>
            <div class="vscroll2"><svg viewBox="0 0 12 8" width="12" height="8"><path d="M1 6.5l5-5l5 5" /></svg><i /><svg viewBox="0 0 12 8" width="12" height="8"><path d="M1 1.5l5 5l5-5" /></svg></div>
          </div>
        </section>
      </aside>
    </main>

    <footer class="status">
      <span class="start">&lt;&lt; Start menu (F1)</span>
      <span v-for="(s, i) in status" :key="s" :class="'s' + i">{{ s }}</span>
      <svg class="resize" viewBox="0 0 12 12" width="12" height="12" aria-hidden="true"><path d="M8 0h3v3h-3zM4 4h3v3h-3zM8 4h3v3h-3zM0 8h3v3h-3zM4 8h3v3h-3zM8 8h3v3h-3z" fill="#bdbdbd" /></svg>
      <button type="button" class="orb" aria-label="Start menu">
        <svg viewBox="0 0 38 38" width="38" height="38">
          <defs><radialGradient id="orbFill" cx=".5" cy=".3" r=".7"><stop offset="0" stop-color="#fbc8b8" /><stop offset=".55" stop-color="#e8704f" /><stop offset="1" stop-color="#c33a22" /></radialGradient></defs>
          <circle cx="19" cy="19" r="18.5" fill="url(#orbFill)" stroke="#a8452e" /><path d="M12 6v26M19 4v30M26 6v26M4 12h30M3 20h32M5 27h28" stroke="#ffd4c4" opacity=".7" />
          <path d="M12 28l5-5l4-10l5 4l3-8" fill="none" stroke="#6b3a36" stroke-width="1.5" /><path d="M11 27h3v3h-3zM20 12h3v3h-3zM25 16h3v3h-3zM28 7h3v3h-3z" fill="#5a3434" />
        </svg>
      </button>
    </footer>
    <div class="mark" aria-hidden="true">知乎 @Gorden</div>
  </div>
</template>

<style>
body { margin: 0; background: #e9ebfa; }
button { font: inherit; color: inherit; border: 0; padding: 0; margin: 0; background: none; }
.bar { display: flex; box-sizing: border-box; flex: none; position: relative; }
.bar.h { height: 28px; background: linear-gradient(#f4f6fd, #e3e5f2 45%, #b6b8d0); border-radius: 3px 4px 4px 3px; border-bottom: 1px solid #9496b4; align-items: center; }
.bar .grip { flex: none; }
.bar.h .grip { width: 2px; height: 16px; margin: 0 3px; background: repeating-linear-gradient(#9c9fb0 0 2px, transparent 2px 4px); }
.bar.v { flex-direction: column; background: linear-gradient(90deg, #fbfcff, #e6e8f5 45%, #b2b4d0); border-left: 1px solid #9fa2b8; border-radius: 3px; }
.bar.v .grip { width: 18px; height: 2px; margin: 4px 3px; background: repeating-linear-gradient(90deg, #9c9fb0 0 2px, transparent 2px 4px); }
.tool { width: 22px; height: 22px; flex: none; display: grid; place-items: center; box-sizing: border-box; }
.tool.on { border: 1px solid #3c8fc4; background: #cfe6f7; }
.bar.h .tool.on { height: 24px; }
.ico { shape-rendering: crispEdges; display: block; }
.ico text { shape-rendering: auto; }
.split { display: flex; flex: none; align-items: center; }
.menu { width: 9px; height: 22px; display: grid; place-items: center; }
.caret { display: block; shape-rendering: crispEdges; }
.sep { flex: none; background: #b9bbcc; }
.bar.h .sep { width: 1px; height: 14px; margin: 0 4px 0 3px; }
.bar.v .sep { height: 1px; width: 18px; margin: 4px 3px 3px; }
.fillup { flex: 1; }
.cap { flex: none; display: flex; background: linear-gradient(#b0b2cc, #c9cbe0 50%, #e9ebf9); }
.bar.h .cap { width: 11px; height: 28px; flex-direction: column; align-items: center; justify-content: space-between; padding: 5px 0 3px; box-sizing: border-box; align-self: flex-start; border-radius: 0 4px 0 0; }
.bar.v .cap { box-sizing: border-box; height: 12px; width: 100%; align-items: center; justify-content: flex-end; padding-right: 3px; background: linear-gradient(90deg, #f0f1fa, #c3c5dc); }
.combo { position: relative; display: flex; align-items: center; height: 24px; background: #fff; box-sizing: border-box; flex: none; }
.combo select { appearance: none; border: 0; background: transparent; font: 14px "Noto Sans", sans-serif; color: #111; width: 100%; height: 100%; padding: 0 14px 0 3px; }
.combo .drop { position: absolute; right: 0; top: 0; bottom: 0; width: 13px; display: grid; place-items: center; background: linear-gradient(#f0f2fb, #c5c8de); pointer-events: none; }
.combo.zoom { width: 72px; height: 26px; margin: 0 3px; }
.combo.font, .combo.size { border: 1px solid #a5a7b4; background: #f6f6fa; }
.combo.font select, .combo.size select { color: #85878f; padding-left: 1px; }
.combo.font .drop, .combo.size .drop { background: none; }
.combo.font .drop svg, .combo.size .drop svg { fill: #888; }
.combo.font { width: 159px; margin: 0 4px; }
.combo.size { width: 75px; margin-right: 2px; }
.combo .tt { display: flex; flex: none; padding-left: 6px; font: 700 15px "Liberation Serif", serif; }
.combo .tt small { font-size: 13px; color: #777; }
.swatch { width: 36px; height: 17px; border: 1px solid #a9abb8; background: #f7f8ff; margin-left: 4px; box-sizing: border-box; }
.wide .menu { width: 13px; }
.wide .menu svg { fill: #777; }
</style>

<style scoped>
.shell { min-height: 100vh; box-sizing: border-box; display: flex; flex-direction: column; border: 1px solid #4f5046; border-bottom-width: 2px; background: #e9ebfa; font-family: "Noto Sans", sans-serif; color: #1a1a1a; position: relative; overflow: hidden; }
h1, h2 { margin: 0; font-weight: 400; white-space: nowrap; }
.title { height: 37px; display: flex; align-items: center; background: #fff; padding-left: 9px; }
.title h1 { font-size: 16px; line-height: 20px; margin-left: 5px; }
.sysbtns { margin-left: auto; margin-right: 2px; display: flex; }
.sysbtns button { width: 58px; height: 36px; display: grid; place-items: center; }
.sysbtns svg { fill: none; stroke: #111; stroke-width: 1; }
.row { display: flex; gap: 2px; height: 28px; }
.w1, .w5 { padding-left: 2px; }
.w1 { width: 789px; } .w2 { width: 238px; } .w3 { width: 38px; } .w4 { flex: 1; }
.w5 { width: 89px; } .w6 { width: 212px; } .w7 { width: 557px; } .w8 { width: 207px; }
.w9 { width: 322px; } .w10 { width: 208px; } .w11 { width: 168px; } .w12 { flex: 1; }
.menubar { height: 30px; display: flex; align-items: center; font-size: 13px; }
.menubar .dots { width: 2px; height: 16px; margin: 0 4px 0 4px; background: repeating-linear-gradient(#9c9fb0 0 2px, transparent 2px 4px); }
.menubar button { padding: 0 8px 0 7px; }
.menubar u { text-underline-offset: 2px; }
.body { flex: 1; display: flex; min-height: 0; }
.docktabs { width: 23px; flex: none; display: flex; flex-direction: column; padding-top: 2px; }
.docktabs button { writing-mode: vertical-rl; font: 13px "Liberation Mono", monospace; color: #5f6064; background: #f1f1f1; border: 1px solid #d4d5dc; border-left: 0; padding: 16px 5px 28px 1px; text-align: left; }
.docktabs button:first-child { padding-top: 5px; }
.leftbars { width: 36px; margin-left: 2px; flex: none; display: flex; flex-direction: column; gap: 37px; }
.leftbars .small { width: 26px; }
.center { flex: 1; min-width: 0; display: flex; flex-direction: column; }
.mdi { flex: 1; position: relative; background: #a9a9a9; border-left: 2px solid #6e6e72; border-top: 2px solid #808084; overflow: hidden; }
.bottom { padding-left: 1px; height: 29px; }
.win { position: absolute; box-sizing: border-box; display: flex; flex-direction: column; }
.win header { display: flex; align-items: center; height: 36px; flex: none; }
.win header h2 { font-size: 15px; margin-left: 4px; }
.winbtns { margin-left: auto; display: flex; gap: 2px; }
.winbtns button { width: 42px; height: 24px; border: 1px solid #7f97bd; border-radius: 2px; background: linear-gradient(#d3e0ef, #b9cbe2); display: grid; place-items: center; box-sizing: border-box; }
.winbtns svg { fill: #fff; stroke: #556274; fill-rule: evenodd; }
.winbtns .close { background: linear-gradient(#d98b7c, #c04a36 50%, #ad3626); border-color: #7c2a24; }
.sheet { left: 16px; top: 14px; width: 495px; height: 402px; background: linear-gradient(#bccddf, #dbe7f4 60px, #d8e6f5); border: 1px solid #55606c; border-radius: 6px 6px 0 0; padding: 4px 10px 9px 9px; }
.sheet header h2 { color: #8f99a6; }
.sheet header { height: 33px; }
.sheet .winbtns button { background: #c8d6e8; border-color: #8ea1c4; }
.sheetbody { display: flex; flex: 1; min-height: 0; overflow: hidden; background: #e0dfe4; border-top: 2px solid #6a6c70; border-left: 1px solid #6a6c70; }
table { border-collapse: separate; border-spacing: 0; table-layout: fixed; width: 386px; height: 1px; font: 14px "Liberation Sans", sans-serif; }
th, td { padding: 0; box-sizing: border-box; height: 20px; }
thead th { height: 29px; font-weight: 400; font-size: 14px; border-right: 1px solid #111; border-bottom: 1px solid #111; }
.corner { width: 86px; text-align: left; }
.corner svg { display: block; margin: 0 0 4px 2px; overflow: visible; }
thead .colA { font-weight: 700; border: 1px dotted #000; outline: 1px solid #222; outline-offset: -1px; }
thead .colB { background: #20201e; color: #f2f2f2; position: relative; }
.colB::after { content: ""; position: absolute; right: -3px; bottom: -5px; width: 5px; height: 5px; background: #04042e; border: 1px solid #fff; box-sizing: border-box; }
tbody th { background: #b5bbd4; border-bottom: 1px solid #111; border-right: 2px solid #111; text-align: right; font-weight: 400; font-size: 14px; padding-right: 4px; line-height: 18px; }
.sel { background: #04042e; border-right: 1px solid #52527a; border-bottom: 1px solid #52527a; }
.sel.first { box-shadow: inset 1px 0 #f0f0f4; }
.sel.last { border-right: 2px solid #111; box-shadow: inset -1px 0 #f0f0f4; }
tbody tr:first-child .sel { border-top: 1px solid #f0f0f4; }
.yel { background: #fafac6; border-right: 1px solid #c0c0b0; border-bottom: 1px solid #c9c9a8; }
.alt .sel { background: #08084a; } .alt .yel { background: #f5f5b0; }
.tall th, .tall td { height: 40px; vertical-align: top; }
.spark { display: block; width: 98px; height: 38px; }
.spark path { stroke: #dcecff; fill: none; }
.vscroll { margin-left: auto; width: 20px; background: #f0f0f0; display: flex; flex-direction: column; align-items: center; }
.vscroll svg { margin: 7px 0; fill: none; stroke: #555; stroke-width: 2; }
.vscroll i { width: 18px; height: 21px; background: #cdcdcd; }
.sheet footer { height: 23px; display: flex; align-items: center; background: #f3f3f3; border: 1px solid #333; overflow: hidden; }
.sheet footer button { width: 22px; height: 21px; background: #f0f0f0; border: 1px solid #777; display: grid; place-items: center; box-sizing: border-box; }
.sheet footer strong { font: 700 16px "Liberation Serif", serif; }
.plot { left: 93px; top: 174px; width: 681px; height: 551px; border: 2px solid #86187e; border-radius: 0 6px 0 0; background: linear-gradient(#98b3d1, #b9d2ec 36px, #c5daee 120px, #b8cfe8 130px); padding: 4px 8px 8px; }
.plot header { height: 32px; }
.plot header h2 { color: #222; }
.page { flex: 1; position: relative; background: #fff; border-top: 2px solid #808488; border-left: 1px solid #6f7478; border-right: 8px solid #c2c2c2; border-bottom: 1px solid #fff; }
.layer { position: absolute; left: 0; top: 0; width: 25px; height: 25px; background: #c4c4c4; font: 700 19px/25px "Liberation Sans", sans-serif; text-align: center; }
.chart { display: block; width: 100%; height: 100%; font: 14px "Liberation Sans", sans-serif; }
.chart .big { font-size: 19px; }
.ax { stroke: #222; fill: none; shape-rendering: crispEdges; }
.lg { stroke: #222; fill: #fff; shape-rendering: crispEdges; }
.trace { stroke: #000; fill: none; stroke-linejoin: bevel; }
.rightbars { width: 26px; margin-left: 2px; flex: none; display: flex; flex-direction: column; gap: 1px; }
.rightbars .grow { flex: 1; }
.panels { width: 190px; margin-left: 4px; flex: none; display: flex; flex-direction: column; gap: 4px; }
.panel header { height: 29px; display: flex; align-items: center; padding: 0 4px; background: linear-gradient(90deg, #c4d5e6, #dde4f1); }
.panel header h2 { font-size: 13px; flex: 1; }
.panel header svg { overflow: visible; shape-rendering: crispEdges; }
.panel .ln { stroke: #111; fill: none; }
.panel .bold { stroke-width: 2; shape-rendering: auto; }
.treebox { height: 115px; border: 2px solid #6b6f76; border-right-width: 1px; border-bottom-width: 1px; background: #fff; padding: 1px; font-size: 13px; }
.node, .node label { display: flex; align-items: center; }
.node { height: 22px; }
.node.root { background: #0878d7; color: #fff; gap: 3px; padding-left: 3px; outline: 1px dotted #e8c890; outline-offset: -1px; }
.node.l1 { padding-left: 19px; gap: 4px; }
.node.l2 { padding-left: 49px; font-size: 14px; }
.exp { width: 11px; height: 11px; flex: none; border: 1px solid #8a98b0; box-sizing: border-box; background: linear-gradient(#2c4a9c, #2c4a9c) center/7px 1px no-repeat #f4f7fb; }
.node input { appearance: none; width: 17px; height: 17px; margin: 0 3px 0 0; border: 1px solid #333; background: #fff; display: grid; place-items: center; }
.node input:checked::after { content: ""; width: 9px; height: 4px; border-left: 1px solid #333; border-bottom: 1px solid #333; transform: rotate(-48deg); }
.node.l2 input { margin-right: 1px; }
.sample { width: 47px; height: 1px; background: #111; margin-right: 4px; }
.apps { flex: 1; display: flex; flex-direction: column; min-height: 0; }
.appbody { flex: 1; display: flex; background: #f0f0f0; border-bottom: 2px solid #d4d4da; min-height: 0; }
.rail { width: 29px; flex: none; position: relative; border-right: 1px solid #777; }
.rail svg { position: absolute; left: 1px; top: 0; }
.rail span { position: absolute; left: 8px; top: 81px; writing-mode: vertical-rl; font: 700 15px/18px "Liberation Sans", sans-serif; }
.mid { flex: 1; display: flex; flex-direction: column; min-width: 0; background: #fff; margin-top: 2px; }
.applist { flex: 1 1 0; overflow: hidden; }
.app { display: flex; flex-direction: column; align-items: center; width: 164px; height: 164px; gap: 4px; font-size: 15px; line-height: 20px; }
.app svg { overflow: visible; flex: none; margin-top: 2px; }
.app span { width: 120px; text-align: center; }
.app.seq { color: #757575; }
.vscroll2 { width: 22px; flex: none; display: flex; flex-direction: column; align-items: center; padding-bottom: 20px; }
.vscroll2 svg, .hscroll svg { fill: none; stroke: #555; stroke-width: 2; flex: none; }
.vscroll2 svg { margin: 8px 0; }
.vscroll2 i { width: 19px; flex: 0 0 348px; background: #cdcdcd; }
.vscroll2 svg:last-child { margin-top: auto; }
.hscroll { height: 20px; display: flex; align-items: center; background: #f0f0f0; padding: 0 6px; }
.hscroll i { width: 77px; height: 18px; background: #cdcdcd; margin-left: 8px; }
.hscroll svg:last-child { margin-left: auto; }
.status { height: 25px; display: flex; align-items: center; background: #f0f0f0; border-top: 1px solid #d8dae4; font-size: 13px; position: relative; padding-left: 44px; white-space: nowrap; }
.status span { border-right: 1px solid #d0d0da; padding: 0 3px 0 4px; flex: none; }
.status .start { flex: 1; padding: 0; }
.status .s0 { padding: 0 5px; margin-right: 8px; }
.resize { margin: 8px 3px 0 3px; }
.orb { position: absolute; left: 2px; top: -14px; width: 38px; height: 38px; }
.mark { position: absolute; right: 28px; bottom: 26px; font: 32px/40px "Noto Sans", "Noto Sans CJK SC", sans-serif; color: #fff; text-shadow: 1px 1px 3px #666; opacity: .9; pointer-events: none; }
</style>
